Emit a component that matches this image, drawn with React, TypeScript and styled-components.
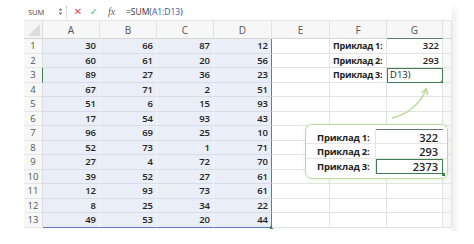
import styled, { createGlobalStyle } from 'styled-components';

const GlobalStyle = createGlobalStyle`
    *, *::before, *::after {
        box-sizing: border-box;
    }
    body {
        margin: 0;
        background: #ffffff;
        font-family: "Open Sans", "Liberation Sans", sans-serif;
    }
`;

const columns = ['A', 'B', 'C', 'D', 'E', 'F', 'G', ''];

const data: number[][] = [
    [30, 66, 87, 12],
    [60, 61, 20, 56],
    [89, 27, 36, 23],
    [67, 71, 2, 51],
    [51, 6, 15, 93],
    [17, 54, 93, 43],
    [96, 69, 25, 10],
    [52, 73, 1, 71],
    [27, 4, 72, 70],
    [39, 52, 27, 61],
    [12, 93, 73, 61],
    [8, 25, 34, 22],
    [49, 53, 20, 44],
];

const examples = [
    { label: 'Приклад 1:', value: '322' },
    { label: 'Приклад 2:', value: '293' },
    { label: 'Приклад 3:', value: 'D13)' },
];

const callout = [
    { label: 'Приклад 1:', value: '322' },
    { label: 'Приклад 2:', value: '293' },
    { label: 'Приклад 3:', value: '2373' },
];

function App() {
    return (
        <>
            <GlobalStyle />
            <Card>
                <FormulaBar>
                    <NameBox>SUM</NameBox>
                    <Spinner>
                        <svg width="5" height="9" viewBox="0 0 5 9">
                            <path d="M0.5 3.5 L2.5 1 L4.5 3.5 Z M0.5 5.5 L2.5 8 L4.5 5.5 Z" fill="#777" />
                        </svg>
                    </Spinner>
                    <Divider />
                    <BarIcon $color="#d9534f">✕</BarIcon>
                    <BarIcon $color="#6cb36a">✓</BarIcon>
                    <Fx>fx</Fx>
                    <Formula>=SUM(<Ref>A1:D13</Ref>)</Formula>
                </FormulaBar>
                <Sheet>
                    <Corner>
                        <svg width="12" height="12" viewBox="0 0 12 12">
                            <path d="M12 0 L12 12 L0 12 Z" fill="#dcdcdc" />
                        </svg>
                    </Corner>
                    {columns.map((c, i) => (
                        <ColHead key={c + i} $active={c === 'G'}>{c}</ColHead>
                    ))}
                    {data.map((row, r) => (
                        <RowGroup key={r} row={r} values={row} />
                    ))}
                    <Callout>
                        {callout.map((item, i) => (
                            <CalloutRow key={item.label} $last={i === callout.length - 1}>
                                <CalloutLabel>{item.label}</CalloutLabel>
                                <CalloutValue $first={i === 0} $active={i === 2}>
                                    {item.value}
                                    {i === 2 && <Handle />}
                                </CalloutValue>
                            </CalloutRow>
                        ))}
                    </Callout>
                    <Arrow width="50" height="40" viewBox="0 0 50 40">
                        <path d="M4 34 Q28 28 38 6" fill="none" stroke="#b7dc95" strokeWidth="1.4" />
                        <path d="M33.5 9 L38.5 4.5 L39.5 11" fill="none" stroke="#b7dc95" strokeWidth="1.4" />
                    </Arrow>
                </Sheet>
            </Card>
        </>
    );
}

function RowGroup({ row, values }: { row: number; values: number[] }) {
    const last = row === data.length - 1;
    const example = examples[row];
    const editing = row === 2;
    return (
        <>
            <RowHead $active={editing}>{row + 1}</RowHead>
            {values.map((v, c) => (
                <Cell key={c} $sel $selRight={c === 3} $selBottom={last}>
                    {v}
                    {last && c === 3 && <Handle />}
                </Cell>
            ))}
            <Cell />
            <Cell $label $left>{example ? example.label : ''}</Cell>
            <Cell $left={editing} $active={editing}>
                {example ? example.value : ''}
                {editing && <Handle />}
            </Cell>
            <Cell $edge />
        </>
    );
}

const Card = styled.div`
    position: relative;
    width: 428px;
    margin: 3px 0 0 24px;
    background: #ffffff;
    box-shadow: 4px 5px 7px rgba(0, 0, 0, 0.07);
`;

const FormulaBar = styled.div`
    display: flex;
    align-items: center;
    height: 18px;
    border-bottom: 1px solid #e6e6e6;
    font-size: 8px;
    color: #333;
`;

const NameBox = styled.div`
    width: 34px;
    padding-left: 4px;
    font-size: 7.5px;
    color: #444;
`;

const Spinner = styled.div`
    display: flex;
    align-items: center;
    width: 8px;
`;

const Divider = styled.div`
    width: 0;
    height: 12px;
    margin-right: 3px;
    border-left: 1px dotted #bbb;
`;

const BarIcon = styled.span<{ $color: string }>`
    width: 16px;
    text-align: center;
    color: ${p => p.$color};
    font-family: "DejaVu Sans", sans-serif;
    font-size: 10px;
`;

const Fx = styled.span`
    width: 15px;
    margin-left: 6px;
    font-family: "Liberation Serif", serif;
    font-style: italic;
    font-size: 10px;
    color: #666;
`;

const Formula = styled.span`
    margin-left: 3px;
    font-size: 8.5px;
    color: #333;
`;

const Ref = styled.span`
    color: #3358b8;
`;

const Sheet = styled.div`
    position: relative;
    display: grid;
    grid-template-columns: 19px 57px 57px 57px 58px 58px 57px 56px 9px;
    grid-template-rows: 18px repeat(13, 14.5px);
    padding-bottom: 3px;
`;

const Corner = styled.div`
    display: flex;
    align-items: flex-end;
    justify-content: flex-end;
    padding: 0 2px 2px 0;
    background: #f5f5f5;
    border-right: 1px solid #dedede;
    border-bottom: 1px solid #d6d6d6;
`;

const ColHead = styled.div<{ $active?: boolean }>`
    display: flex;
    align-items: center;
    justify-content: center;
    background: #f7f7f7;
    border-right: 1px solid #e2e2e2;
    border-bottom: 1px solid ${p => (p.$active ? '#5d7d66' : '#d6d6d6')};
    font-size: 10px;
    color: #555;
`;

const RowHead = styled.div<{ $active?: boolean }>`
    display: flex;
    align-items: center;
    justify-content: center;
    background: #f7f7f7;
    border-right: 1px solid ${p => (p.$active ? '#3f7d52' : '#dedede')};
    border-bottom: 1px solid #e6e6e6;
    font-size: 9.5px;
    color: #555;
`;

const Cell = styled.div<{
    $sel?: boolean;
    $selRight?: boolean;
    $selBottom?: boolean;
    $label?: boolean;
    $left?: boolean;
    $active?: boolean;
    $edge?: boolean;
}>`
    position: relative;
    display: flex;
    align-items: center;
    justify-content: ${p => (p.$left ? 'flex-start' : 'flex-end')};
    padding: 0 ${p => (p.$left ? '0' : '3px')} 0 ${p => (p.$left ? '3px' : '0')};
    background: ${p => (p.$sel ? '#e9eef8' : p.$edge ? '#f8f8f8' : '#ffffff')};
    border-right: 1px solid ${p => (p.$selRight ? '#5a78bd' : p.$sel ? '#f3f5fa' : '#e3e3e3')};
    border-bottom: 1px solid ${p => (p.$selBottom ? '#5a78bd' : p.$sel ? '#d7dce6' : '#e3e3e3')};
    outline: ${p => (p.$active ? '1.5px solid #3f7d52' : 'none')};
    outline-offset: -1px;
    font-size: ${p => (p.$label ? '9px' : '9.5px')};
    font-weight: ${p => (p.$label ? 700 : p.$active ? 400 : 600)};
    letter-spacing: ${p => (p.$label ? '-0.25px' : '0')};
    color: #222;
    white-space: nowrap;
`;

const Handle = styled.span`
    position: absolute;
    right: -2px;
    bottom: -2px;
    width: 3px;
    height: 3px;
    background: #3f7d52;
`;

const Callout = styled.div`
    position: absolute;
    left: 281px;
    top: 103px;
    width: 143px;
    padding: 4px 0;
    background: #ffffff;
    border: 1.5px solid #bcdc99;
    border-radius: 7px;
    box-shadow: 0 1px 4px rgba(120, 160, 80, 0.15);
`;

const CalloutRow = styled.div<{ $last?: boolean }>`
    display: grid;
    grid-template-columns: 70px 67px;
    height: 15px;
    border-bottom: ${p => (p.$last ? 'none' : '1px solid #e6e6e6')};
`;

const CalloutLabel = styled.div`
    display: flex;
    align-items: center;
    padding-left: 11px;
    border-right: 1px solid #e3e3e3;
    font-size: 9.5px;
    font-weight: 700;
    letter-spacing: -0.2px;
    color: #222;
    white-space: nowrap;
`;

const CalloutValue = styled.div<{ $first?: boolean; $active?: boolean }>`
    position: relative;
    display: flex;
    align-items: center;
    justify-content: flex-end;
    padding-right: 5px;
    border-top: ${p => (p.$first ? '1.5px solid #5d7d66' : 'none')};
    outline: ${p => (p.$active ? '1.5px solid #3f7d52' : 'none')};
    outline-offset: -1px;
    font-size: 11px;
    font-weight: 600;
    color: #222;
`;

const Arrow = styled.svg`
    position: absolute;
    left: 364px;
    top: 63px;
`;

export default App;
